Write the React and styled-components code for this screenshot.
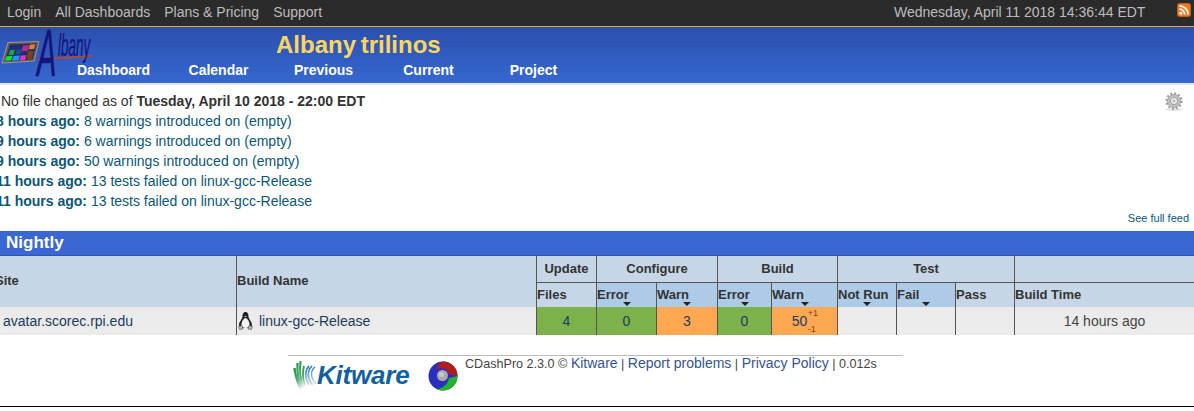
import React from "react"
import styled, { createGlobalStyle } from "styled-components"

const GlobalStyle = createGlobalStyle`
  html, body {
    margin: 0;
    padding: 0;
    background: #fff;
    overflow: hidden;
    font-family: "Liberation Sans", Arial, sans-serif;
    font-size: 14px;
    color: #333;
  }
`

const TopBar = styled.div`
  height: 26px;
  background: #2b2b2b;
  border-bottom: 1px solid #e0a93c;
  display: flex;
  align-items: flex-start;
  padding-left: 7px;
  color: #bdbdbd;
  line-height: 25px;
`

const TopLink = styled.a`
  margin-right: 14px;
`

const TopDate = styled.div`
  margin-left: auto;
  width: 283px;
`

const RssWrap = styled.div`
  width: 17px;
  padding-top: 3px;
  line-height: 0;
`

const Header = styled.div`
  position: relative;
  height: 56px;
  background: linear-gradient(#2a50ae, #3767cf);
  border-bottom: 2px solid #e4e4e4;
`

const LogoWrap = styled.div`
  position: absolute;
  left: 0;
  top: 0;
  line-height: 0;
`

const Title = styled.div`
  height: 34px;
  padding-left: 276px;
  box-sizing: border-box;
  padding-top: 4px;
  font-size: 24px;
  line-height: 28px;
  font-weight: bold;
  word-spacing: -2px;
  color: #ffd65c;
`

const Nav = styled.div`
  display: flex;
  padding-left: 61px;
  position: relative;
`

const NavItem = styled.a`
  width: 105px;
  text-align: center;
  color: #fff;
  font-weight: bold;
  line-height: 18px;
`

const Feed = styled.div`
  position: relative;
  height: 146px;
  padding-top: 6px;
  box-sizing: border-box;
`

const FeedRow = styled.div`
  height: 20px;
  line-height: 20px;
  white-space: nowrap;
  color: ${p => (p.$plain ? "#333" : "#0b5675")};
  margin-left: ${p => (p.$plain ? "1px" : "-4px")};
`

const GearWrap = styled.div`
  position: absolute;
  right: 10px;
  top: 7px;
  line-height: 0;
`

const FullFeed = styled.div`
  position: absolute;
  right: 5px;
  top: 126px;
  font-size: 11px;
  line-height: 14px;
  color: #0b5675;
`

const SectionBar = styled.div`
  height: 24px;
  line-height: 23px;
  padding-left: 6px;
  background: #3a67d1;
  border-bottom: 1px solid #2a55b5;
  color: #fff;
  font-size: 17px;
  font-weight: bold;
`

const Table = styled.table`
  width: 1194px;
  table-layout: fixed;
  border-collapse: separate;
  border-spacing: 0;
`

const Head = styled.th`
  position: relative;
  padding: 0 0 2px 0;
  background: ${p => (p.$sorted ? "#adcbe7" : "#c6d6e7")};
  border-left: ${p => (p.$first ? "none" : "1px solid #555")};
  border-top: ${p => (p.$sub ? "1px solid #555" : "none")};
  height: 24px;
  font-size: 13px;
  line-height: 15px;
  text-align: ${p => (p.$center ? "center" : "left")};
  vertical-align: ${p => (p.$sub ? "top" : "middle")};
  color: #333;
  white-space: nowrap;
  box-sizing: content-box;
  ${p => p.$sub && "padding: 4px 0 0 0; height: 20px;"}
  ${p => p.$first && "text-indent: -5px;"}

  ${p =>
    p.$sorted &&
    `&::after {
      content: "";
      position: absolute;
      left: 50%;
      bottom: 1px;
      margin-left: -4px;
      border-left: 4px solid transparent;
      border-right: 4px solid transparent;
      border-top: 4px solid #222;
    }`}
`

const Cell = styled.td`
  height: 28px;
  padding: 0;
  background: ${p => p.$bg || "#ebebeb"};
  border-left: ${p => (p.$first ? "none" : "1px solid #555")};
  text-align: ${p => (p.$left ? "left" : "center")};
  color: ${p => p.$color || "#1c3b5e"};
  line-height: 28px;
`

const SiteName = styled.span`
  padding-left: 3px;
`

const BuildName = styled.div`
  display: flex;
  align-items: center;
  gap: 5px;
`

const WarnCount = styled.span`
  position: relative;
  left: -5px;
`

const Delta = styled.span`
  position: absolute;
  left: 16px;
  top: ${p => p.$top}px;
  font-size: 9px;
  line-height: 10px;
  color: #8a3a22;
`

const Footer = styled.div`
  height: 72px;
  padding-top: 20px;
  box-sizing: border-box;
  border-bottom: 1px solid #000;
`

const FooterInner = styled.div`
  width: 615px;
  margin-left: 288px;
  border-top: 1px solid #bbb;
  display: flex;
  align-items: flex-start;
`

const Kitware = styled.div`
  display: flex;
  align-items: center;
  margin: 4px 0 0 5px;
  width: 135px;
`

const KitwareText = styled.span`
  font-size: 26px;
  line-height: 30px;
  font-weight: bold;
  font-style: italic;
  color: #13609f;
  letter-spacing: -0.2px;
`

const Globe = styled.div`
  line-height: 0;
  margin-top: 5px;
  width: 37px;
`

const Credits = styled.div`
  font-size: 12.6px;
  line-height: 14px;
  color: #444;
`

const CreditLink = styled.a`
  font-size: 14px;
  color: #35538f;
`

const RssIcon = () => (
  <svg width="14" height="14" viewBox="0 0 14 14">
    <rect x="0.5" y="0.5" width="13" height="13" rx="2" fill="#ee7b22" stroke="#c85e12" />
    <circle cx="3.8" cy="10.2" r="1.5" fill="#fff" />
    <path d="M2.4 6.2a5.4 5.4 0 0 1 5.4 5.4" fill="none" stroke="#fff" strokeWidth="1.7" />
    <path d="M2.4 2.9a8.7 8.7 0 0 1 8.7 8.7" fill="none" stroke="#fff" strokeWidth="1.7" />
  </svg>
)

const GearIcon = () => (
  <svg width="20" height="20" viewBox="0 0 20 20">
    <ellipse cx="10" cy="17.6" rx="9" ry="1.4" fill="#e2e2e2" />
    <circle cx="10" cy="9" r="7.6" fill="none" stroke="#a2a2a2" strokeWidth="2.2" strokeDasharray="2 1.98" />
    <circle cx="10" cy="9" r="6.4" fill="#c4c4c4" stroke="#9a9a9a" />
    <circle cx="10" cy="9" r="3.6" fill="#f0f0f0" stroke="#9a9a9a" />
    <circle cx="10" cy="9" r="1.6" fill="#bbb" />
  </svg>
)

const AlbanyLogo = () => (
  <svg width="100" height="56" viewBox="0 0 100 56" style={{ overflow: "visible" }}>
    <path d="M8 15.5 39 14.5 34 34 2 36Z" fill="#5c5860" stroke="#a89888" strokeWidth="1" />
    <path d="M10 17.5 36.5 16.5 32.5 32.5 5 34Z" fill="#1e2f6c" />
    <path d="M10 23 15 22.8 13.5 28 8.5 28.3Z" fill="#1da14a" />
    <path d="M6.5 29.2 12.5 29 11 33.5 5 33.8Z" fill="#14e024" />
    <path d="M16.5 22.5 22 22.3 20.5 27 15 27.5Z" fill="#174f9c" />
    <path d="M13.5 29 20 28.6 18.5 33.2 12 33.5Z" fill="#1a9cf0" />
    <path d="M23 18.5 29 18.2 27.5 24 21.500 24.3Z" fill="#b52a8b" />
    <path d="M21 28.5 26.5 28.2 25 33 19.5 33.3Z" fill="#ee2fc4" />
    <path d="M30 17.5 35.5 17.3 34 22 28.5 22.3Z" fill="#ee7b22" />
    <path d="M28 24.3 33.5 24 31.8 32.5 26.5 32.8Z" fill="#7a4414" />
    <path d="M38 32.5 92 29" stroke="#a9483c" strokeWidth="1.8" fill="none" />
    <text
      fontFamily="Liberation Sans, sans-serif"
      fontStyle="italic"
      fill="#14147a"
      transform="translate(37 0) scale(0.5 1.16)"
    >
      <tspan x="0" y="42" fontSize="58" stroke="#14147a" strokeWidth="0.5">
        A
      </tspan>
      <tspan x="42" y="25" fontSize="27" stroke="#14147a" strokeWidth="0.2">
        lbany
      </tspan>
    </text>
  </svg>
)

const TuxIcon = () => (
  <svg width="17" height="20" viewBox="0 0 17 20">
    <path d="M8.5 1C6 1 5.5 3.5 5.5 5.5 5.5 8 2 10.5 2 14c0 2 1 3 2 3h9c1 0 2-1 2-3 0-3.500-3.500-6-3.500-8.500C11.500 3.500 11 1 8.500 1Z" fill="#222" />
    <path d="M8.500 7C6.500 7 4.500 11 4.500 13.500S6.500 17 8.500 17s4-1 4-3.500S10.500 7 8.500 7Z" fill="#f4f4f4" />
    <path d="M1.500 15.500 5 14.500 6 18 2.500 18.500Z" fill="#b9b9b9" stroke="#555" strokeWidth="0.6" />
    <path d="M15.500 15.500 12 14.500 11 18 14.500 18.500Z" fill="#b9b9b9" stroke="#555" strokeWidth="0.6" />
    <path d="M7 5h3l-1.500 1.200Z" fill="#c9c9c9" />
  </svg>
)

const KitwareMark = () => (
  <svg width="24" height="30" viewBox="0 0 24 30">
    <defs>
      <linearGradient id="kwGreen" x1="0" y1="0" x2="0" y2="1">
        <stop offset="0" stopColor="#1f9446" />
        <stop offset="0.6" stopColor="#58ad74" />
        <stop offset="1" stopColor="#e6f2e8" />
      </linearGradient>
      <linearGradient id="kwBlue" x1="0" y1="0" x2="0" y2="1">
        <stop offset="0" stopColor="#2f76b0" />
        <stop offset="1" stopColor="#cfe0ee" />
      </linearGradient>
    </defs>
    <path d="M1.500 8C2 16 5 23 7.500 29" stroke="url(#kwGreen)" strokeWidth="2.400" fill="none" />
    <path d="M4.500 3C4 12 5.500 21 8.500 28" stroke="url(#kwGreen)" strokeWidth="2.200" fill="none" />
    <path d="M7.500 1C6.500 10 7.500 20 10 27" stroke="url(#kwGreen)" strokeWidth="2" fill="none" />
    <path d="M11 6C9.500 12 10 20 12 26" stroke="url(#kwGreen)" strokeWidth="1.800" fill="none" />
    <path d="M16 6C11.500 11 12 18 16 25" stroke="url(#kwBlue)" strokeWidth="1.700" fill="none" />
    <path d="M19 6C14 11 14.500 18 19.500 25" stroke="url(#kwBlue)" strokeWidth="1.700" fill="none" />
    <path d="M22 7C17 11 17.500 18 23 24" stroke="url(#kwBlue)" strokeWidth="1.400" fill="none" />
  </svg>
)

const CDashGlobe = () => (
  <svg width="30" height="30" viewBox="0 0 30 30">
    <circle cx="15" cy="15" r="14.500" fill="#2b2fc0" />
    <path d="M15 .5A14.500 14.500 0 0 1 29.500 15L21 13C19 7 14 6 9 9 9 5 11 1.500 15 .5Z" fill="#b31c1c" />
    <path d="M29.500 15A14.500 14.500 0 0 1 9 28.200C14 27 20 24 21 17Z" fill="#22b52b" />
    <circle cx="14.500" cy="14.500" r="5.500" fill="#ababab" />
    <circle cx="13.500" cy="13.500" r="2.500" fill="#c9c9c9" />
  </svg>
)

const feed = [
  { age: "8 hours ago:", text: "8 warnings introduced on (empty)" },
  { age: "9 hours ago:", text: "6 warnings introduced on (empty)" },
  { age: "9 hours ago:", text: "50 warnings introduced on (empty)" },
  { age: "11 hours ago:", text: "13 tests failed on linux-gcc-Release" },
  { age: "11 hours ago:", text: "13 tests failed on linux-gcc-Release" },
]

const widths = [236, 300, 60, 60, 61, 54, 66, 59, 59, 59, 180]

const subHeads = [
  { label: "Files" },
  { label: "Error", sorted: true },
  { label: "Warn", sorted: true },
  { label: "Error", sorted: true },
  { label: "Warn", sorted: true },
  { label: "Not Run", sorted: true },
  { label: "Fail", sorted: true },
  { label: "Pass" },
  { label: "Build Time" },
]

const App = () => (
  <>
    <GlobalStyle />
    <TopBar>
      <TopLink>Login</TopLink>
      <TopLink>All Dashboards</TopLink>
      <TopLink>Plans &amp; Pricing</TopLink>
      <TopLink>Support</TopLink>
      <TopDate>Wednesday, April 11 2018 14:36:44 EDT</TopDate>
      <RssWrap>
        <RssIcon />
      </RssWrap>
    </TopBar>
    <Header>
      <LogoWrap>
        <AlbanyLogo />
      </LogoWrap>
      <Title>Albany trilinos</Title>
      <Nav>
        <NavItem>Dashboard</NavItem>
        <NavItem>Calendar</NavItem>
        <NavItem>Previous</NavItem>
        <NavItem>Current</NavItem>
        <NavItem>Project</NavItem>
      </Nav>
    </Header>
    <Feed>
      <FeedRow $plain>
        No file changed as of <b>Tuesday, April 10 2018 - 22:00 EDT</b>
      </FeedRow>
      {feed.map((row, i) => (
        <FeedRow key={i}>
          <b>{row.age}</b> {row.text}
        </FeedRow>
      ))}
      <GearWrap>
        <GearIcon />
      </GearWrap>
      <FullFeed>See full feed</FullFeed>
    </Feed>
    <SectionBar>Nightly</SectionBar>
    <Table>
      <colgroup>
        {widths.map((w, i) => (
          <col key={i} style={{ width: w }} />
        ))}
      </colgroup>
      <thead>
        <tr>
          <Head rowSpan={2} $first>
            Site
          </Head>
          <Head rowSpan={2}>Build Name</Head>
          <Head $center>Update</Head>
          <Head colSpan={2} $center>
            Configure
          </Head>
          <Head colSpan={2} $center>
            Build
          </Head>
          <Head colSpan={3} $center>
            Test
          </Head>
          <Head />
        </tr>
        <tr>
          {subHeads.map((h, i) => (
            <Head key={i} $sub $sorted={h.sorted}>
              {h.label}
            </Head>
          ))}
        </tr>
      </thead>
      <tbody>
        <tr>
          <Cell $first $left>
            <SiteName>avatar.scorec.rpi.edu</SiteName>
          </Cell>
          <Cell $left>
            <BuildName>
              <TuxIcon />
              linux-gcc-Release
            </BuildName>
          </Cell>
          <Cell $bg="#7db14c">4</Cell>
          <Cell $bg="#7db14c">0</Cell>
          <Cell $bg="#ffa852">3</Cell>
          <Cell $bg="#7db14c">0</Cell>
          <Cell $bg="#ffa852">
            <WarnCount>
              50
              <Delta $top={-5}>+1</Delta>
              <Delta $top={11}>-1</Delta>
            </WarnCount>
          </Cell>
          <Cell />
          <Cell />
          <Cell />
          <Cell $color="#444">14 hours ago</Cell>
        </tr>
      </tbody>
    </Table>
    <Footer>
      <FooterInner>
        <Kitware>
          <KitwareMark />
          <KitwareText>Kitware</KitwareText>
        </Kitware>
        <Globe>
          <CDashGlobe />
        </Globe>
        <Credits>
          CDashPro 2.3.0 © <CreditLink>Kitware</CreditLink> | <CreditLink>Report problems</CreditLink> |{" "}
          <CreditLink>Privacy Policy</CreditLink> | 0.012s
        </Credits>
      </FooterInner>
    </Footer>
  </>
)

export default App
